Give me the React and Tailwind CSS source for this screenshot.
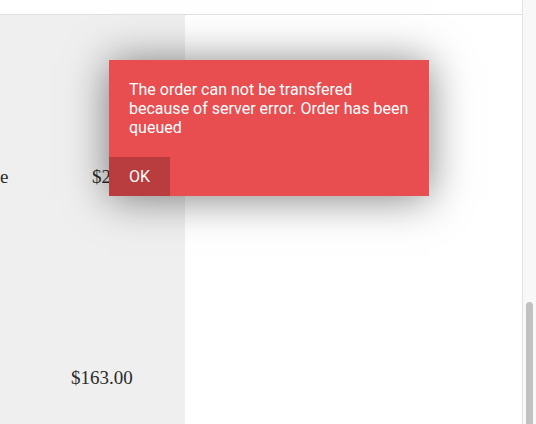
import React from "react";

export default function App() {
  return (
    <div className="relative w-[536px] h-[424px] overflow-hidden bg-white flex">
      <div className="flex-1 flex flex-col min-w-0">
        <div className="h-[15px] border-b border-[#e0e0e0] bg-white shrink-0" />
        <div className="flex-1 flex">
          <div className="w-[185px] bg-[#efefef] flex flex-col font-['Liberation_Serif',serif] text-[19px] text-[#2a2a2a]">
            <div className="h-[150px]" />
            <div className="flex items-center h-[24px]">
              <span className="w-[92px]">e</span>
              <span>$24.00</span>
            </div>
            <div className="h-[177px]" />
            <div className="flex h-[24px] items-center pl-[71px]">$163.00</div>
          </div>
          <div className="flex-1 bg-white" />
        </div>
      </div>
      <div className="w-[14px] border-l border-[#e2e2e2] bg-[#f8f8f8] flex flex-col">
        <div className="h-[302px]" />
        <div className="flex-1 mx-[3px] rounded-t-[5px] bg-[#c1c1c1]" />
      </div>

      <div className="absolute left-[109px] top-[60px] w-[320px] h-[136px] bg-[#e84d4f] shadow-[0_2px_40px_rgba(0,0,0,0.5)] flex flex-col font-['Roboto',sans-serif] text-white">
        <div className="flex-1 px-[20px] pt-[20px] text-[16px] leading-[19px]">
          The order can not be transfered because of server error. Order has been queued
        </div>
        <div className="h-[39px] w-[61px] bg-[#b93c3e] flex items-center pl-[20px] text-[16px]">OK</div>
      </div>
    </div>
  );
}
